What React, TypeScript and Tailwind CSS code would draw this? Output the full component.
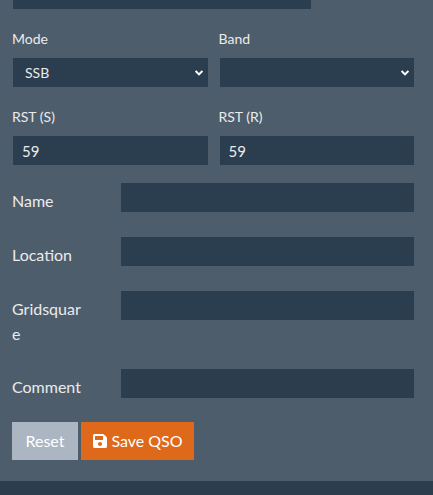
import { FaSave } from "react-icons/fa";

const fieldClass =
  "block h-[31px] w-full border border-[#4e5d6c] bg-[#2b3e50] text-[#ebebeb] focus:outline-none";

function Row({ label }: { label: string }) {
  return (
    <div className="flex items-start">
      <label className="mb-[-1px] w-[75px] shrink-0 break-all pt-[6px] text-base leading-[25px] text-[#ebebeb]">
        {label}
      </label>
      <input className={`${fieldClass} ml-[33px] px-2 text-base`} />
    </div>
  );
}

function Select({ value, options }: { value: string; options: string[] }) {
  return (
    <div className="relative">
      <select className={`${fieldClass} appearance-none pl-3 text-sm`} defaultValue={value}>
        {options.map((o) => (
          <option key={o} value={o}>
            {o}
          </option>
        ))}
      </select>
      <svg
        className="pointer-events-none absolute right-[6px] top-[13px] h-[6px] w-[8px]"
        viewBox="0 0 8 6"
        fill="none"
        stroke="#ffffff"
        strokeWidth="2"
      >
        <path d="M0.6 1 L4 4.4 L7.4 1" />
      </svg>
    </div>
  );
}

export default function App() {
  return (
    <div className="flex h-[495px] flex-col overflow-hidden bg-[#4e5d6c] font-['Lato','Open_Sans',sans-serif]">
      <div className="flex-1 pl-3 pr-[18px]">
        <div className="ml-px h-[9px] w-[298px] bg-[#2b3e50]" />

        <div className="mt-[20px] grid grid-cols-2 gap-x-[10px]">
          <div>
            <label className="mb-2 block text-sm leading-5 text-[#ebebeb]">Mode</label>
            <Select value="SSB" options={["SSB", "CW", "FM"]} />
          </div>
          <div>
            <label className="mb-2 block text-sm leading-5 text-[#ebebeb]">Band</label>
            <Select value="" options={["", "20m", "40m"]} />
          </div>
        </div>

        <div className="mt-[19px] grid grid-cols-2 gap-x-[10px]">
          <div>
            <label className="mb-2 block text-sm leading-5 text-[#ebebeb]">RST (S)</label>
            <input className={`${fieldClass} pl-[9px] text-[15px]`} defaultValue="59" />
          </div>
          <div>
            <label className="mb-2 block text-sm leading-5 text-[#ebebeb]">RST (R)</label>
            <input className={`${fieldClass} pl-[9px] text-[15px]`} defaultValue="59" />
          </div>
        </div>

        <div className="mt-4 flex flex-col gap-[23px]">
          <Row label="Name" />
          <Row label="Location" />
          <Row label="Gridsquare" />
          <Row label="Comment" />
        </div>

        <div className="mt-[23px] flex gap-[3px]">
          <button className="h-[38px] w-[66px] bg-[#abb6c2] text-base text-white">Reset</button>
          <button className="flex h-[38px] w-[113px] items-center justify-center gap-1 bg-[#df691a] pl-px text-base text-white">
            <FaSave className="h-4 w-[14px]" />
            Save QSO
          </button>
        </div>
      </div>
      <div className="h-[14px] bg-[#2b3e50]" />
    </div>
  );
}
